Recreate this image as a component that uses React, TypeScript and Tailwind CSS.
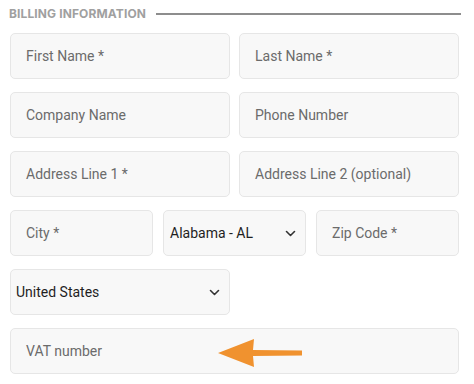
import React from 'react';

function Field({ label }: { label: string }) {
  return (
    <div className="h-[46px] rounded-[5px] border border-[#e6e6e6] bg-[#f8f8f8] flex items-center pl-[15px] text-[14px] text-[#6b6b6b]">
      {label}
    </div>
  );
}

function Select({ value, pad }: { value: string; pad: string }) {
  return (
    <div className={`h-[46px] rounded-[5px] border border-[#e6e6e6] bg-[#f8f8f8] flex items-center justify-between text-[14px] text-[#1f1f1f] ${pad}`}>
      <span>{value}</span>
      <svg width="11" height="7" viewBox="0 0 11 7" fill="none" stroke="#333" strokeWidth={1.6} strokeLinecap="round" strokeLinejoin="round">
        <path d="M1.5 1.5 5.5 5.5l4-4" />
      </svg>
    </div>
  );
}

export default function App() {
  return (
    <div className="w-[474px] h-[384px] bg-white px-[10px] pt-[7px] font-['Roboto','Noto_Sans',sans-serif] antialiased">
      {/* section heading */}
      <div className="flex items-center gap-[10px] pr-[3px] h-[14px]">
        <span className="text-[12px] font-bold text-[#a0a0a0] tracking-[0.01em] -ml-[1px] whitespace-nowrap font-['Inter',sans-serif]">BILLING INFORMATION</span>
        <div className="flex-1 h-[2px] bg-[#8d8d8d]" />
      </div>

      <div className="mt-[12px] w-[449px] flex flex-col gap-[13px]">
        <div className="grid grid-cols-2 gap-[9px]">
          <Field label="First Name *" />
          <Field label="Last Name *" />
        </div>
        <div className="grid grid-cols-2 gap-[9px]">
          <Field label="Company Name" />
          <Field label="Phone Number" />
        </div>
        <div className="grid grid-cols-2 gap-[9px]">
          <Field label="Address Line 1 *" />
          <Field label="Address Line 2 (optional)" />
        </div>
        <div className="grid grid-cols-3 gap-[10px]">
          <Field label="City *" />
          <Select value="Alabama - AL" pad="pl-[6px] pr-[9px]" />
          <Field label="Zip Code *" />
        </div>
        <div className="grid grid-cols-2 gap-[9px]">
          <Select value="United States" pad="pl-[5px] pr-[9px]" />
          <div />
        </div>
        <div className="relative">
          <Field label="VAT number" />
          {/* annotation arrow */}
          <svg className="absolute left-[208px] top-[10px]" width="86" height="30" viewBox="0 0 86 30">
            <path d="M0 15 L36 1 L35 12 L84 12.5 L84 17.5 L35 18 L36 29 Z" fill="#f0922f" strokeLinejoin="round" />
          </svg>
        </div>
      </div>
    </div>
  );
}
